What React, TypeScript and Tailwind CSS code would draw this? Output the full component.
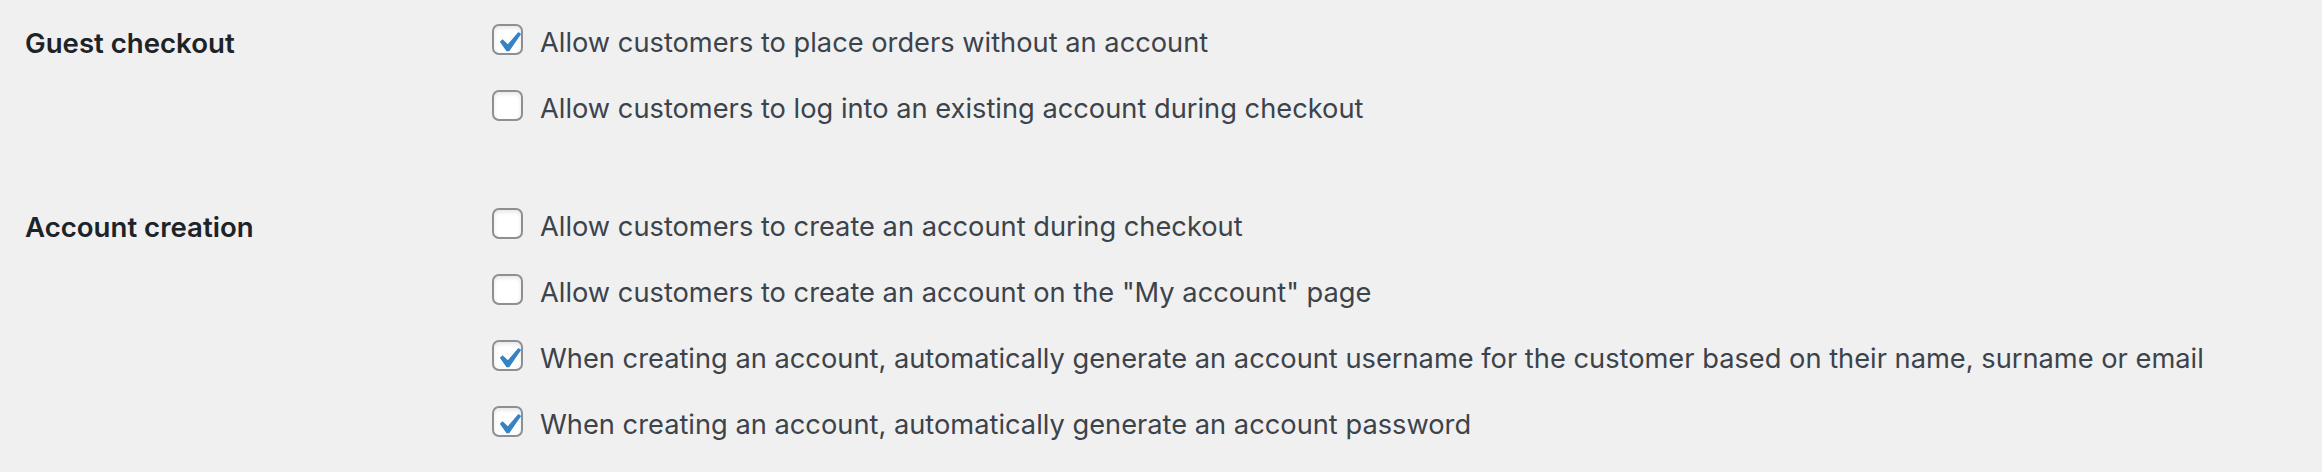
type Option = {
    label: string;
    checked: boolean;
}

type Section = {
    title: string;
    options: Option[];
}

const sections: Section[] = [
    {
        title: "Guest checkout",
        options: [
            { label: "Allow customers to place orders without an account", checked: true },
            { label: "Allow customers to log into an existing account during checkout", checked: false },
        ],
    },
    {
        title: "Account creation",
        options: [
            { label: "Allow customers to create an account during checkout", checked: false },
            { label: "Allow customers to create an account on the \"My account\" page", checked: false },
            { label: "When creating an account, automatically generate an account username for the customer based on their name, surname or email", checked: true },
            { label: "When creating an account, automatically generate an account password", checked: true },
        ],
    },
];

const Checkbox = ({ checked }: { checked: boolean }) => (
    <span className="relative block shrink-0 w-[31px] h-[31px] rounded-[7px] border-2 border-[#8c8f94] bg-white shadow-[inset_0_2px_4px_rgba(0,0,0,0.1)]">
        {checked && (
            <svg viewBox="0 0 20 20" className="absolute -left-[6px] -top-[4px] w-[41px] h-[41px]">
                <path d="M14.83 4.89l1.34.94-5.81 8.38H9.02L5.78 9.67l1.34-1.25 2.57 2.4z" fill="#3582c4" />
            </svg>
        )}
    </span>
);

const App = () => {
    return (
        <div className="w-[2322px] h-[472px] bg-[#f0f0f1] pl-[25px] pt-[24px] font-['Inter','Liberation_Sans',sans-serif]">
            <div className="flex flex-col gap-[87px]">
                {sections.map(section => (
                    <div key={section.title} className="flex">
                        <div className="w-[467px] h-[31px] pt-[4px] leading-[31px] text-[27.6px] font-semibold text-[#1d2327]">
                            {section.title}
                        </div>
                        <div className="flex flex-col gap-[35px]">
                            {section.options.map(option => (
                                <label key={option.label} className="flex items-start gap-[17px] h-[31px]">
                                    <Checkbox checked={option.checked} />
                                    <span className="mt-[3px] text-[27.25px] leading-[31px] text-[#3c434a] whitespace-nowrap">
                                        {option.label}
                                    </span>
                                </label>
                            ))}
                        </div>
                    </div>
                ))}
            </div>
        </div>
    );
}

export default App;
